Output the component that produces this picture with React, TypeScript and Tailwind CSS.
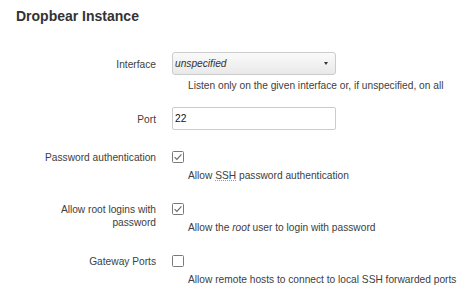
import React from "react";

function Check({ checked }: { checked?: boolean }) {
  return (
    <svg width="12" height="12" viewBox="0 0 12 12" className="block">
      <rect x="0.5" y="0.5" width="11" height="11" rx="1" fill="#fff" stroke="#7a7a7a" />
      {checked && <path d="M2.6 6.2 L4.9 8.4 L9.4 3.4" fill="none" stroke="#666" strokeWidth="1.1" />}
    </svg>
  );
}

function Row({
  label,
  children,
  className,
}: {
  label: React.ReactNode;
  children: React.ReactNode;
  className?: string;
}) {
  return (
    <div className={"flex " + (className ?? "")}>
      <div className="w-[156px] shrink-0 text-right leading-[13px] text-[#404040]">{label}</div>
      <div className="ml-[16px] flex-1">{children}</div>
    </div>
  );
}

function Help({ children }: { children: React.ReactNode }) {
  return <div className="ml-[16px] h-[14px] whitespace-nowrap leading-[14px] text-[#404040]">{children}</div>;
}

export default function App() {
  return (
    <div
      className="h-[300px] w-[474px] overflow-hidden bg-white text-[10.2px]"
      style={{ fontFamily: '"Liberation Sans", Arial, sans-serif' }}
    >
      <h2 className="pl-[16px] pt-[6px] text-[14px] font-bold leading-[20px] text-[#333]">Dropbear Instance</h2>

      <Row className="mt-[26px]" label={<div className="pt-[6px]">Interface</div>}>
        <div className="flex h-[23px] w-[164px] items-center justify-between rounded-[3px] border border-[#ccc] bg-gradient-to-b from-[#fafafa] to-[#e9e9e9] pl-[2px] pr-[7px]">
          <span className="italic text-[#333]">unspecified</span>
          <svg width="4" height="3" viewBox="0 0 4 3">
            <path d="M0 0 H4 L2 3 Z" fill="#333" />
          </svg>
        </div>
        <div className="mt-[4px]">
          <Help>Listen only on the given interface or, if unspecified, on all</Help>
        </div>
      </Row>

      <Row className="mt-[14px]" label={<div className="pt-[6px]">Port</div>}>
        <div className="flex h-[23px] w-[164px] items-center rounded-[2px] border border-[#ccc] bg-white pl-[2px] text-[#111]">
          22
        </div>
      </Row>

      <Row className="mt-[20px]" label={<div className="pt-[1px]">Password authentication</div>}>
        <div className="flex h-[14px] items-center">
          <Check checked />
        </div>
        <div className="mt-[4.5px]">
          <Help>
            Allow{" "}
            <abbr className="underline decoration-dotted decoration-[#999]">SSH</abbr> password
            authentication
          </Help>
        </div>
      </Row>

      <Row
        className="mt-[19.5px]"
        label={
          <div className="pt-[1px]">
            Allow root logins with
            <br />
            password
          </div>
        }
      >
        <div className="flex h-[14px] items-center">
          <Check checked />
        </div>
        <div className="mt-[4.5px]">
          <Help>
            Allow the <em>root</em> user to login with password
          </Help>
        </div>
      </Row>

      <Row className="mt-[19.5px]" label={<div className="pt-[1px]">Gateway Ports</div>}>
        <div className="flex h-[14px] items-center">
          <Check />
        </div>
        <div className="mt-[4.5px]">
          <Help>Allow remote hosts to connect to local SSH forwarded ports</Help>
        </div>
      </Row>
    </div>
  );
}
